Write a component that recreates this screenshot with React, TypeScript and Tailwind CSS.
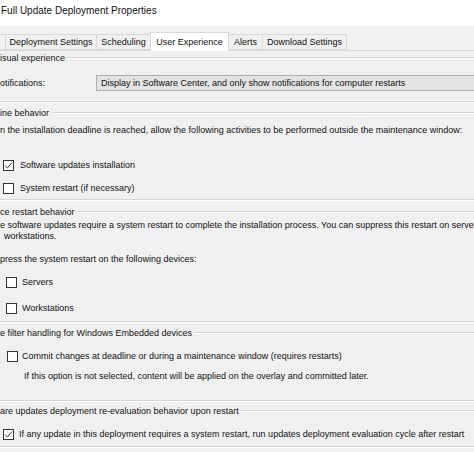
import React from "react";

function Box({ checked }: { checked?: boolean }) {
  return (
    <div className="w-[11px] h-[11px] border border-[#333333] bg-white shrink-0 flex items-center justify-center">
      {checked && (
        <svg width="9" height="9" viewBox="0 0 9 9">
          <path d="M1 4.5 L3.5 7 L8 1.5" fill="none" stroke="#333333" strokeWidth="1" />
        </svg>
      )}
    </div>
  );
}

function GroupHeader({ label, className }: { label: string; className?: string }) {
  return (
    <div className={"flex items-center h-[12px] whitespace-nowrap " + (className ?? "")}>
      <span>{label}</span>
      <div className="flex-1 ml-[2px] h-[2px] border-t border-[#d5d5d5] border-b border-b-white" />
    </div>
  );
}

function GroupBottom({ className }: { className?: string }) {
  return <div className={"h-[2px] border-t border-[#d5d5d5] border-b border-b-white " + (className ?? "")} />;
}

function CheckRow({ checked, label, className }: { checked?: boolean; label: string; className?: string }) {
  return (
    <div className={"flex items-center h-[12px] whitespace-nowrap " + (className ?? "")}>
      <Box checked={checked} />
      <span>{label}</span>
    </div>
  );
}

function Tab({ label, selected, className }: { label: string; selected?: boolean; className?: string }) {
  return (
    <div
      className={
        "flex items-center justify-center border border-[#d9d9d9] whitespace-nowrap -ml-px " +
        (selected
          ? "h-[19px] bg-white border-b-white relative z-10 mb-[-1px] "
          : "h-[16px] bg-[#f0f0f0] ") +
        (className ?? "")
      }
    >
      {label}
    </div>
  );
}

export default function App() {
  return (
    <div className="w-[474px] h-[452px] overflow-hidden bg-[#f0f0f0] text-[9px] leading-[12px] text-[#111111] font-['Liberation_Sans',Arial,sans-serif]">
      <div className="h-[26px] bg-white text-[10px] pl-[1px] pt-[5px] whitespace-nowrap">
        Full Update Deployment Properties
      </div>
      <div className="h-[25px] flex items-end border-b border-[#d9d9d9]">
        <Tab label="" className="w-[7px] ml-[-1px]" />
        <Tab label="Deployment Settings" className="w-[92px]" />
        <Tab label="Scheduling" className="w-[55px]" />
        <Tab label="User Experience" selected className="w-[79px]" />
        <Tab label="Alerts" className="w-[35px]" />
        <Tab label="Download Settings" className="w-[85px]" />
      </div>

      {/* Group 1 */}
      <GroupHeader label="isual experience" className="mt-[1px]" />
      <div className="mt-[11px] h-[16px] flex items-center whitespace-nowrap">
        <span className="w-[96px] shrink-0">otifications:</span>
        <div className="flex-1 h-[16px] flex items-center pl-[4px] bg-[#e3e3e3] border border-[#adadad] border-r-0 overflow-hidden">
          Display in Software Center, and only show notifications for computer restarts
        </div>
      </div>
      <GroupBottom className="mt-[10px]" />

      {/* Group 2 */}
      <GroupHeader label="ine behavior" className="mt-[4px]" />
      <div className="mt-[5px] h-[12px] whitespace-nowrap">
        n the installation deadline is reached, allow the following activities to be performed outside the maintenance window:
      </div>
      <CheckRow checked label="Software updates installation" className="mt-[23px] pl-[3px] gap-[6px]" />
      <CheckRow label="System restart (if necessary)" className="mt-[11px] pl-[3px] gap-[6px]" />
      <GroupBottom className="mt-[5px]" />

      {/* Group 3 */}
      <GroupHeader label="ce restart behavior" className="mt-[5px]" />
      <div className="mt-[2px] leading-[11px] whitespace-nowrap">
        <div>e software updates require a system restart to complete the installation process. You can suppress this restart on servers and</div>
        <div className="pl-[4px]">workstations.</div>
      </div>
      <div className="mt-[11px] h-[12px] whitespace-nowrap">press the system restart on the following devices:</div>
      <CheckRow label="Servers" className="mt-[11px] pl-[6px] gap-[5px]" />
      <CheckRow label="Workstations" className="mt-[14px] pl-[6px] gap-[5px]" />
      <GroupBottom className="mt-[7px]" />

      {/* Group 4 */}
      <GroupHeader label="e filter handling for Windows Embedded devices" className="mt-[4px]" />
      <CheckRow label="Commit changes at deadline or during a maintenance window (requires restarts)" className="mt-[11px] pl-[7px] gap-[4px]" />
      <div className="mt-[8px] h-[12px] pl-[24px] whitespace-nowrap">
        If this option is not selected, content will be applied on the overlay and committed later.
      </div>
      <GroupBottom className="mt-[18px]" />

      {/* Group 5 */}
      <GroupHeader label="are updates deployment re-evaluation behavior upon restart" className="mt-[3px]" />
      <CheckRow checked label="If any update in this deployment requires a system restart, run updates deployment evaluation cycle after restart" className="mt-[11px] pl-[3px] gap-[5px]" />
      <GroupBottom className="mt-[6px]" />
    </div>
  );
}
